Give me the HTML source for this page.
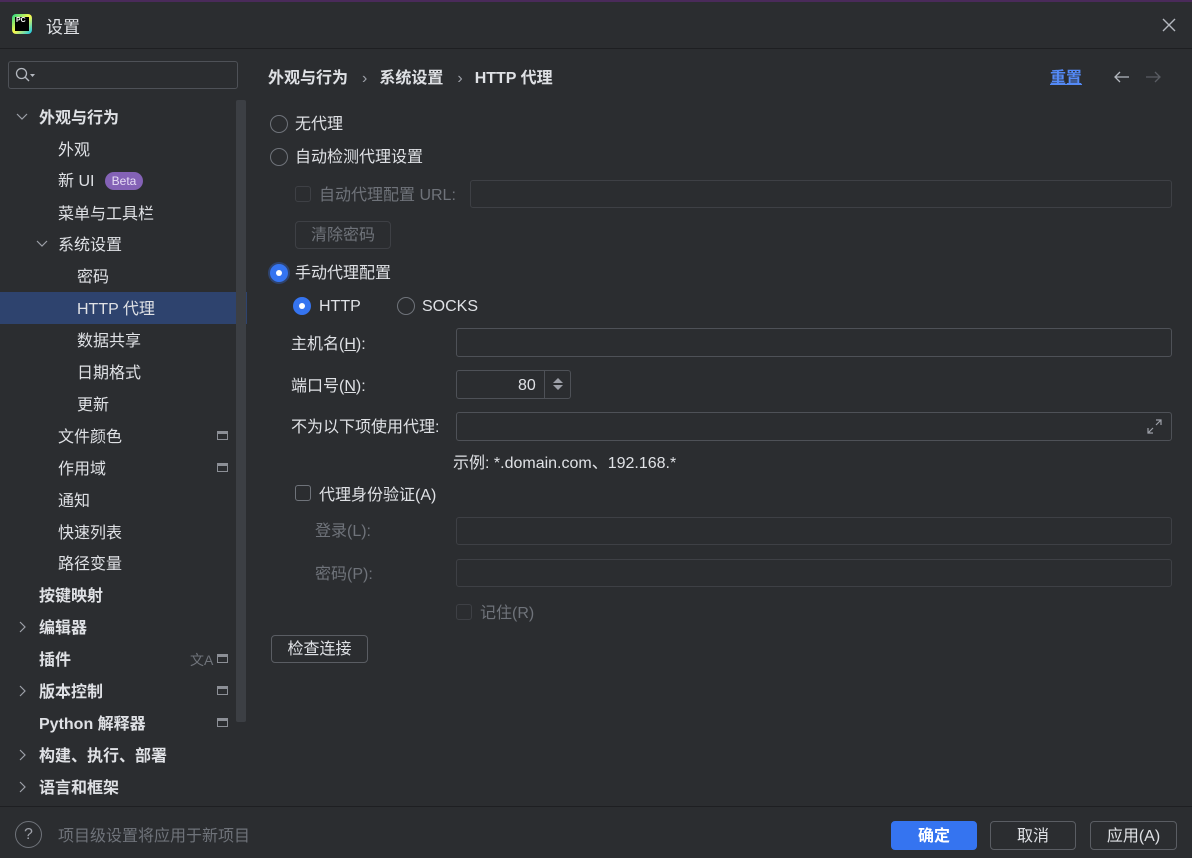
<!DOCTYPE html>
<html><head><meta charset="utf-8"><style>
*{margin:0;padding:0;box-sizing:border-box}
body{width:1192px;height:858px;background:#2b2d30;color:#dfe1e5;font-family:"Liberation Sans","Noto Sans CJK SC",sans-serif;font-size:16px;position:relative;overflow:hidden}
.a{position:absolute;white-space:nowrap}
.t{position:absolute;white-space:nowrap;line-height:20px;transform:translateY(1px)}
.b{font-weight:bold}
.dim{color:#6f737a}
.inp{position:absolute;border:1px solid #4e5157;border-radius:3px;background:#2b2d30}
.radio{position:absolute;width:18px;height:18px;border:1px solid #6f737a;border-radius:50%}
.rsel{position:absolute;width:18px;height:18px;border-radius:50%;background:#3574f0}
.rsel:after{content:"";position:absolute;left:6px;top:6px;width:6px;height:6px;border-radius:50%;background:#fff}
.cb{position:absolute;width:16px;height:16px;border:1px solid #6f737a;border-radius:3px}
.btn{position:absolute;border:1px solid #5a5d63;border-radius:4px;text-align:center;color:#dfe1e5}
.ic{position:absolute;width:11px;height:9px;border:1px solid #8c8f96;border-top-width:3px}
.sep{font-weight:normal;color:#9da0a8;margin:0 12px 0 14px}
</style></head><body>
<div class="a" style="left:0;top:0;width:1192px;height:2px;background:#4a2a5a"></div>
<div class="a" style="left:12px;top:14px;width:20px;height:20px;border-radius:4px;background:linear-gradient(135deg,#21d789,#fcf84a 50%,#07c3f2)"></div>
<div class="a" style="left:15px;top:17px;width:14px;height:14px;background:#000;color:#fff;font-size:7px;line-height:8px;padding-left:1px;font-weight:bold">PC</div>
<div class="t" style="left:46px;top:17px;font-size:17px">设置</div>
<svg class="a" style="left:1162px;top:18px" width="14" height="14"><path d="M1 1L13 13M13 1L1 13" stroke="#b4b8bf" stroke-width="1.4"/></svg>
<div class="a" style="left:0;top:48px;width:1192px;height:1px;background:#1e1f22"></div>

<div class="inp" style="left:8px;top:61px;width:230px;height:28px"></div>
<svg class="a" style="left:15px;top:67px" width="22" height="16"><circle cx="6.5" cy="6.5" r="5" fill="none" stroke="#b4b8bf" stroke-width="1.3"/><path d="M10 10L14 14" stroke="#b4b8bf" stroke-width="1.3"/><path d="M15 7h5l-2.5 3z" fill="#b4b8bf"/></svg>

<div class="a" style="left:0;top:292px;width:247px;height:32px;background:#2e436e"></div>
<div class="a" style="left:236px;top:100px;width:10px;height:622px;background:#3c3f44;border-radius:2px"></div>

<svg class="a" style="left:16px;top:113px" width="12" height="8"><path d="M1 1L6 6L11 1" stroke="#9da0a8" fill="none" stroke-width="1.2"/></svg>
<div class="t b" style="left:39px;top:108px">外观与行为</div>
<div class="t" style="left:58px;top:140px">外观</div>
<div class="t" style="left:58px;top:171px">新 UI</div>
<div class="a" style="left:105px;top:172px;width:38px;height:18px;border-radius:9px;background:#8462b6;color:#e6dcf5;font-size:12px;text-align:center;line-height:18px">Beta</div>
<div class="t" style="left:58px;top:204px">菜单与工具栏</div>
<svg class="a" style="left:36px;top:240px" width="12" height="8"><path d="M1 1L6 6L11 1" stroke="#9da0a8" fill="none" stroke-width="1.2"/></svg>
<div class="t" style="left:58px;top:235px">系统设置</div>
<div class="t" style="left:77px;top:267px">密码</div>
<div class="t" style="left:77px;top:299px">HTTP 代理</div>
<div class="t" style="left:77px;top:331px">数据共享</div>
<div class="t" style="left:77px;top:363px">日期格式</div>
<div class="t" style="left:77px;top:395px">更新</div>
<div class="t" style="left:58px;top:427px">文件颜色</div><div class="ic" style="left:217px;top:431px"></div>
<div class="t" style="left:58px;top:459px">作用域</div><div class="ic" style="left:217px;top:463px"></div>
<div class="t" style="left:58px;top:491px">通知</div>
<div class="t" style="left:58px;top:523px">快速列表</div>
<div class="t" style="left:58px;top:554px">路径变量</div>
<div class="t b" style="left:39px;top:586px">按键映射</div>
<svg class="a" style="left:19px;top:621px" width="8" height="12"><path d="M1 1L6 6L1 11" stroke="#9da0a8" fill="none" stroke-width="1.2"/></svg>
<div class="t b" style="left:39px;top:618px">编辑器</div>
<div class="t b" style="left:39px;top:650px">插件</div><div class="t dim" style="left:190px;top:649px;font-size:14px">文A</div><div class="ic" style="left:217px;top:654px"></div>
<svg class="a" style="left:19px;top:685px" width="8" height="12"><path d="M1 1L6 6L1 11" stroke="#9da0a8" fill="none" stroke-width="1.2"/></svg>
<div class="t b" style="left:39px;top:682px">版本控制</div><div class="ic" style="left:217px;top:686px"></div>
<div class="t b" style="left:39px;top:714px">Python 解释器</div><div class="ic" style="left:217px;top:718px"></div>
<svg class="a" style="left:19px;top:749px" width="8" height="12"><path d="M1 1L6 6L1 11" stroke="#9da0a8" fill="none" stroke-width="1.2"/></svg>
<div class="t b" style="left:39px;top:746px">构建、执行、部署</div>
<svg class="a" style="left:19px;top:781px" width="8" height="12"><path d="M1 1L6 6L1 11" stroke="#9da0a8" fill="none" stroke-width="1.2"/></svg>
<div class="t b" style="left:39px;top:778px">语言和框架</div>

<div class="t b" style="left:268px;top:68px">外观与行为<span class="sep">›</span>系统设置<span class="sep">›</span>HTTP 代理</div>
<div class="t b" style="left:1050px;top:68px;color:#548af7;text-decoration:underline">重置</div>
<svg class="a" style="left:1114px;top:71px" width="16" height="12"><path d="M15 6H2M6 1L1 6L6 11" stroke="#b4b8bf" fill="none" stroke-width="1.3"/></svg>
<svg class="a" style="left:1145px;top:71px" width="16" height="12"><path d="M1 6H14M10 1L15 6L10 11" stroke="#5a5d63" fill="none" stroke-width="1.3"/></svg>

<div class="radio" style="left:270px;top:115px"></div><div class="t" style="left:295px;top:114px">无代理</div>
<div class="radio" style="left:270px;top:148px"></div><div class="t" style="left:295px;top:147px">自动检测代理设置</div>
<div class="cb" style="left:295px;top:186px;border-color:#3e4045"></div><div class="t dim" style="left:319px;top:185px">自动代理配置 URL:</div>
<div class="inp" style="left:470px;top:180px;width:702px;height:28px;border-color:#3e4045"></div>
<div class="btn" style="left:295px;top:221px;width:96px;height:28px;line-height:28px;border-color:#3e4045;color:#6f737a">清除密码</div>
<div class="rsel" style="left:270px;top:264px;box-shadow:0 0 0 2px #2e436e"></div><div class="t" style="left:295px;top:263px">手动代理配置</div>
<div class="rsel" style="left:293px;top:297px"></div><div class="t" style="left:319px;top:296px">HTTP</div>
<div class="radio" style="left:397px;top:297px"></div><div class="t" style="left:422px;top:296px">SOCKS</div>
<div class="t" style="left:291px;top:334px">主机名(<u>H</u>):</div>
<div class="inp" style="left:456px;top:328px;width:716px;height:29px"></div>
<div class="t" style="left:291px;top:376px">端口号(<u>N</u>):</div>
<div class="inp" style="left:456px;top:370px;width:115px;height:29px"></div>
<div class="a" style="left:544px;top:371px;width:1px;height:27px;background:#4e5157"></div>
<div class="t" style="left:518px;top:375px">80</div>
<svg class="a" style="left:551px;top:377px" width="14" height="14"><path d="M2 6L7 1L12 6z M2 8L7 13L12 8z" fill="#9da0a8"/></svg>
<div class="t" style="left:291px;top:417px">不为以下项使用代理:</div>
<div class="inp" style="left:456px;top:412px;width:716px;height:29px"></div>
<svg class="a" style="left:1147px;top:419px" width="15" height="15"><path d="M9 1h5v5M14 1L9 6M6 14H1V9M1 14L6 9" stroke="#9da0a8" fill="none" stroke-width="1.2"/></svg>
<div class="t" style="left:453px;top:453px">示例: *.domain.com、192.168.*</div>
<div class="cb" style="left:295px;top:485px"></div><div class="t" style="left:319px;top:485px">代理身份验证(A)</div>
<div class="t dim" style="left:315px;top:521px">登录(L):</div>
<div class="inp" style="left:456px;top:517px;width:716px;height:28px;border-color:#3e4045"></div>
<div class="t dim" style="left:315px;top:564px">密码(P):</div>
<div class="inp" style="left:456px;top:559px;width:716px;height:28px;border-color:#3e4045"></div>
<div class="cb" style="left:456px;top:604px;border-color:#3e4045"></div><div class="t dim" style="left:480px;top:603px">记住(R)</div>
<div class="btn" style="left:271px;top:635px;width:97px;height:28px;line-height:28px">检查连接</div>

<div class="a" style="left:0;top:806px;width:1192px;height:1px;background:#1e1f22"></div>
<div class="a" style="left:15px;top:821px;width:27px;height:27px;border:1px solid #6f737a;border-radius:50%;color:#9da0a8;text-align:center;line-height:25px;font-size:16px">?</div>
<div class="t dim" style="left:58px;top:826px">项目级设置将应用于新项目</div>
<div class="btn" style="left:891px;top:821px;width:86px;height:29px;line-height:29px;background:#3574f0;border-color:#3574f0;color:#fff;font-weight:bold">确定</div>
<div class="btn" style="left:990px;top:821px;width:86px;height:29px;line-height:29px">取消</div>
<div class="btn" style="left:1090px;top:821px;width:87px;height:29px;line-height:29px">应用(A)</div>
</body></html>
